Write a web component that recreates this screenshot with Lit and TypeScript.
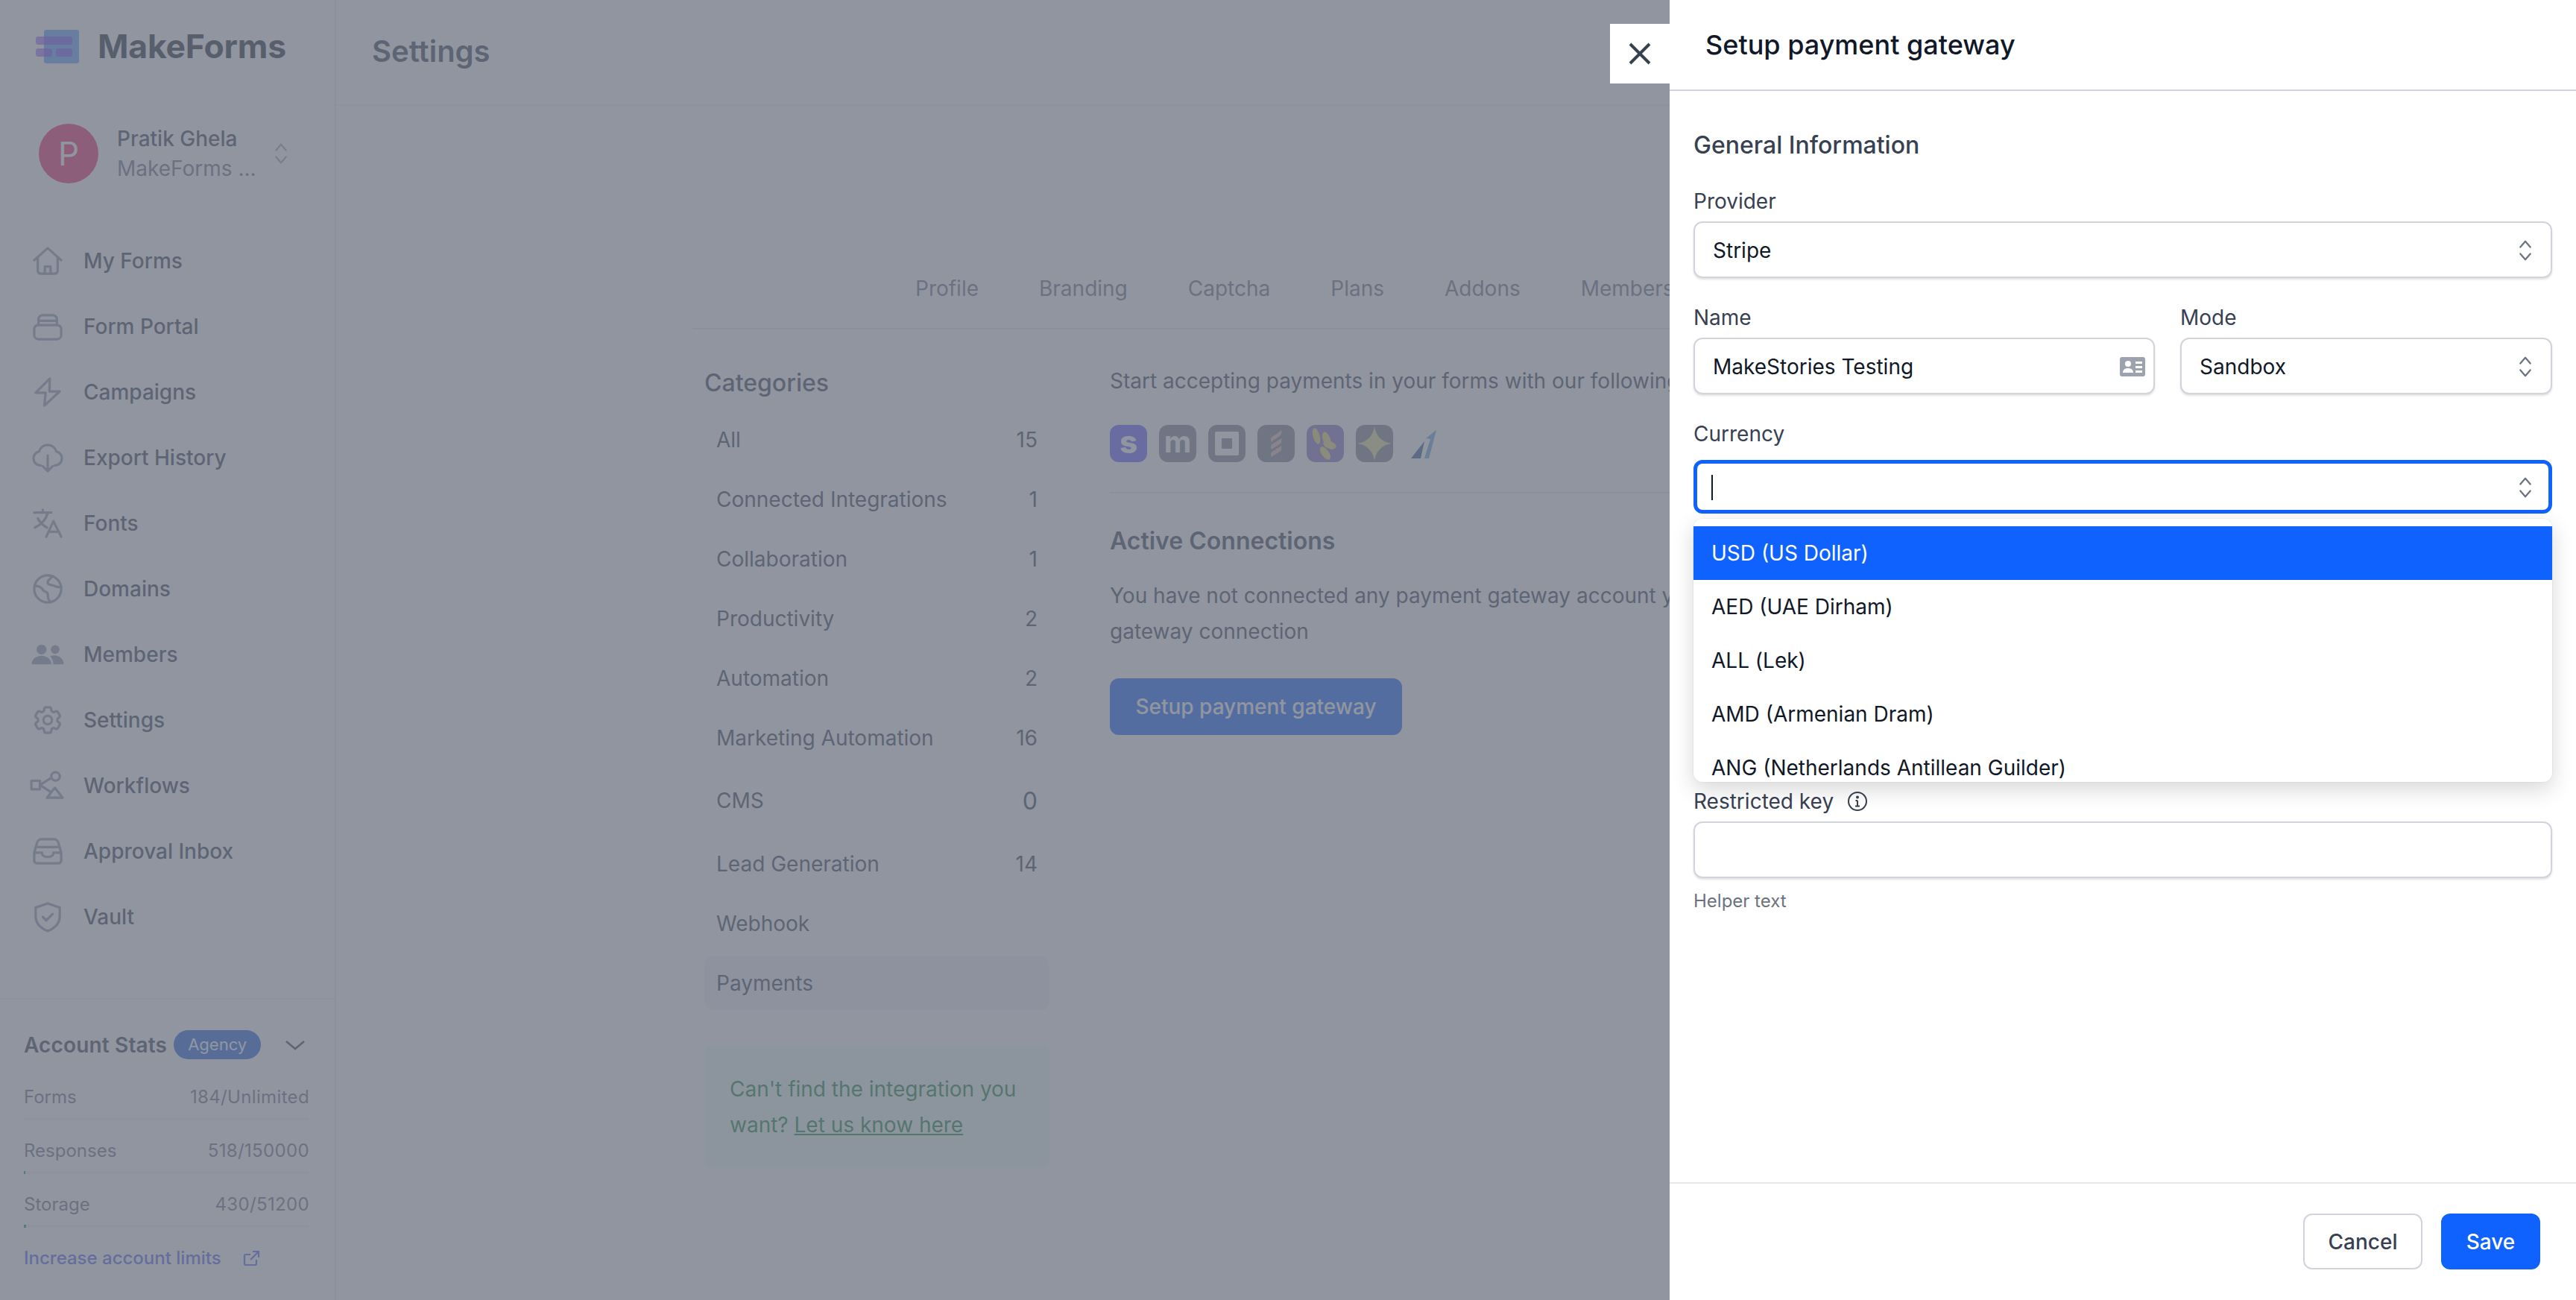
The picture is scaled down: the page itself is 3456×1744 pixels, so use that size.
import { LitElement, html, css, svg } from 'lit';
import { customElement } from 'lit/decorators.js';

const navIcons: Record<string, unknown> = {
  home: svg`<path d="M2.5 11.5 12 3l9.5 8.5M5 9.5V19a2 2 0 0 0 2 2h10a2 2 0 0 0 2-2V9.5M10 21v-5h4v5"/>`,
  portal: svg`<rect x="2.5" y="11" width="19" height="10" rx="3"/><path d="M5.5 11V7a3 3 0 0 1 3-3h7a3 3 0 0 1 3 3v4M5.5 8h13"/>`,
  bolt: svg`<path d="M13.5 2.5 3.5 12.5h7l-.8 9 10.8-10h-7.3z"/>`,
  cloud: svg`<path d="M7 17.5a5 5 0 0 1-1-9.9 6.2 6.2 0 0 1 12 0 5 5 0 0 1-1 9.9M12 10.5V21.5M8.5 18l3.5 3.5 3.5-3.5"/>`,
  fonts: svg`<path d="M2.5 4.5h12M8.5 2.5v2M12 4.5c-1 4.5-4.500 8.500-9 10.500M5 8.500c1.500 3 3.500 5 6.500 6.500M11 21.500l5-11 5.500 11M12.500 18h7.500"/>`,
  globe: svg`<circle cx="12" cy="12" r="9.500"/><path d="M3 10c3 0 4.500.5 5.500 2.500s3 1 3.500 3-.5 3 1.500 5.500M15.500 3c-1.500 2-3.500 2.500-3.500 4.500s3 1.500 5 2.500 3 1 4.500.5"/>`,
  gear: svg`<path d="M9.594 3.94c.09-.542.56-.94 1.11-.94h2.593c.55 0 1.02.398 1.11.94l.213 1.281c.063.374.313.686.645.87.074.04.147.083.22.127.324.196.72.257 1.075.124l1.217-.456a1.125 1.125 0 011.37.49l1.296 2.247a1.125 1.125 0 01-.26 1.431l-1.003.827c-.293.24-.438.613-.431.992a6.759 6.759 0 010 .255c-.007.378.138.75.43.99l1.005.828c.424.35.534.954.26 1.43l-1.298 2.247a1.125 1.125 0 01-1.369.491l-1.217-.456c-.355-.133-.75-.072-1.076.124a6.57 6.57 0 01-.22.128c-.331.183-.581.495-.644.869l-.213 1.28c-.09.543-.56.941-1.11.941h-2.594c-.55 0-1.02-.398-1.11-.94l-.213-1.281c-.062-.374-.312-.686-.644-.87a6.52 6.52 0 01-.22-.127c-.325-.196-.72-.257-1.076-.124l-1.217.456a1.125 1.125 0 01-1.369-.49l-1.297-2.247a1.125 1.125 0 01.26-1.431l1.004-.827c.292-.24.437-.613.43-.992a6.932 6.932 0 010-.255c.007-.378-.138-.75-.43-.99l-1.004-.828a1.125 1.125 0 01-.26-1.43l1.297-2.247a1.125 1.125 0 011.37-.491l1.216.456c.356.133.751.072 1.076-.124.072-.044.146-.087.22-.128.332-.183.582-.495.644-.869l.214-1.281z"/><circle cx="12" cy="12" r="3"/>`,
  flow: svg`<rect x="0.500" y="8.500" width="6" height="6"/><circle cx="17.500" cy="5.500" r="3"/><path d="M6.500 11.500 14.500 6.500M6.500 11.500l7 4.500M17 13.500l5.500 7h-11z"/>`,
  inbox: svg`<path d="m2.500 13 2-7a3 3 0 0 1 3-2.500h9a3 3 0 0 1 3 2.500l2 7M2.500 13v5.500a2 2 0 0 0 2 2h15a2 2 0 0 0 2-2V13M2.500 13H8c0 2 1.500 3 4 3s4-1 4-3h5.500M5 9h14"/>`,
  shield: svg`<path d="M12 2.500 20.500 5.500v6c0 5-3.500 8.500-8.500 10.500-5-2-8.500-5.500-8.500-10.500v-6zM8.500 12l2.500 2.500 4.500-4.500"/>`,
};

const nav = [
  ['My Forms', 'home'], ['Form Portal', 'portal'], ['Campaigns', 'bolt'], ['Export History', 'cloud'],
  ['Fonts', 'fonts'], ['Domains', 'globe'], ['Members', 'members'], ['Settings', 'gear'],
  ['Workflows', 'flow'], ['Approval Inbox', 'inbox'], ['Vault', 'shield'],
];

const stats = [
  { label: 'Forms', value: '184/Unlimited', used: 0 },
  { label: 'Responses', value: '518/150000', used: 0.5 },
  { label: 'Storage', value: '430/51200', used: 0.9 },
];

const tabs = ['Profile', 'Branding', 'Captcha', 'Plans', 'Addons', 'Members'];

const categories = [
  ['All', '15'], ['Connected Integrations', '1'], ['Collaboration', '1'], ['Productivity', '2'],
  ['Automation', '2'], ['Marketing Automation', '16'], ['CMS', '0'], ['Lead Generation', '14'],
  ['Webhook', ''], ['Payments', ''],
];

const currencies = ['USD (US Dollar)', 'AED (UAE Dirham)', 'ALL (Lek)', 'AMD (Armenian Dram)', 'ANG (Netherlands Antillean Guilder)'];

const providers = [
  svg`<rect width="50" height="50" rx="12" fill="#7d7f8c"/><rect x="9" y="9" width="32" height="32" rx="2" fill="#fff"/><rect x="18" y="18" width="14" height="14" rx="1" fill="#7d7f8c"/>`,
  svg`<rect width="50" height="50" rx="12" fill="#7d7f8c"/><path d="M18 18c3-4 9-6 14-11 1 3 0 5-1 7-3 3-9 5-12 9-1-1-1-3-1-5zM18 28c3-4 9-6 14-10 1 3 0 5-1 7-3 3-9 5-12 8-1-1-1-3-1-5zM18 38c3-4 9-6 14-10 1 3 0 5-1 7-3 3-9 5-12 8-1-1-1-3-1-5z" fill="#e6b8b0"/>`,
  svg`<rect width="50" height="50" rx="12" fill="#8a72c8"/><g fill="#e6d56a"><ellipse cx="13" cy="15" rx="4.500" ry="11" transform="rotate(-15 13 15)"/><ellipse cx="27" cy="20" rx="5" ry="11" transform="rotate(-20 27 20)"/><ellipse cx="31" cy="27" rx="9" ry="5" transform="rotate(20 31 27)"/><ellipse cx="25" cy="38" rx="5" ry="10" transform="rotate(-35 25 38)"/></g>`,
  svg`<rect width="50" height="50" rx="12" fill="#7d7f8c"/><path d="M25 2c2 13 10 21 23 23-13 2-21 10-23 23-2-13-10-21-23-23 13-2 21-10 23-23z" fill="#e6e08a"/>`,
  svg`<path d="M42 7 28 18l6 1-8 26h6z" fill="#6ea4dc"/><path d="M8 45 26 22 21 45z" fill="#345a92"/>`,
];

@customElement('app-root')
export class AppRoot extends LitElement {
  static styles = css`
    :host {
      display: block;
      position: relative;
      width: 3456px;
      height: 1744px;
      overflow: hidden;
      background: #fff;
      font-family: Inter, 'Liberation Sans', sans-serif;
      font-size: 28px;
      line-height: 40px;
      color: #374151;
    }
    svg { display: block; flex: none; }
    .layout { display: flex; height: 100%; }

    /* sidebar */
    .sidebar {
      width: 449px;
      flex: none;
      display: flex;
      flex-direction: column;
      border-right: 2px solid #e5e7eb;
    }
    .brand { display: flex; align-items: center; gap: 25px; margin: 40px 0 0 48px; height: 45px; }
    .brand-mark { position: relative; width: 58px; height: 45px; }
    .brand-mark i { position: absolute; display: block; }
    .mark-box { left: 11px; top: 0; width: 47px; height: 45px; border-radius: 3px; background: rgba(38, 132, 255, 0.75); }
    .mark-bar { height: 11px; border-radius: 3px; background: rgba(120, 40, 255, 0.6); }
    .brand-name { font-size: 44.500px; line-height: 45px; font-weight: 700; color: #1f2937; letter-spacing: -0.2px; }
    .account { display: flex; align-items: center; margin: 81px 0 0 52px; }
    .avatar {
      width: 80px;
      height: 80px;
      border-radius: 50%;
      background: #ee2668;
      color: #fff;
      font-size: 44px;
      display: flex;
      align-items: center;
      justify-content: center;
    }
    .who { margin-left: 25px; width: 210px; font-size: 28px; line-height: 40px; }
    .who b { display: block; font-weight: 500; }
    .who span { display: block; color: #6b7280; }
    .nav { margin-top: 60px; }
    .nav-row { display: flex; align-items: center; height: 88px; padding-left: 44px; font-weight: 500; }
    .nav-row svg { width: 40px; height: 40px; fill: none; stroke: #8f97a6; stroke-width: 1.700; stroke-linejoin: round; stroke-linecap: round; }
    .nav-row svg.solid { fill: #8f97a6; stroke: none; width: 44px; margin-left: -2px; margin-right: -2px; }
    .nav-row span { margin-left: 28px; }
    .stats { margin-top: auto; border-top: 2px solid #f3f4f6; height: 405px; padding: 41px 34px 0 32px; box-sizing: border-box; }
    .stats-head { display: flex; align-items: center; height: 39px; }
    .stats-head b { font-weight: 600; font-size: 28px; letter-spacing: 0.15px; }
    .plan {
      margin-left: 9px;
      width: 117px;
      height: 39px;
      border-radius: 20px;
      background: #1d5fdf;
      color: #fff;
      font-size: 22px;
      line-height: 39px;
      text-align: center;
    }
    .stats-head svg { margin-left: auto; margin-right: 6px; width: 26px; height: 14px; fill: none; stroke: #374151; stroke-width: 2.5; }
    .stat { margin-top: 35px; font-size: 24px; line-height: 32px; color: #6b7280; }
    .stat + .stat { margin-top: 25px; }
    .stat-line { display: flex; justify-content: space-between; }
    .stat-line span:last-child { letter-spacing: 0.35px; }
    .bar { height: 4px; margin-top: 11px; background: #f3f4f6; border-radius: 2px; }
    .bar i { display: block; height: 100%; background: #16a34a; }
    .limits { display: flex; align-items: center; margin-top: 25px; color: #4f63ee; font-size: 24px; line-height: 32px; font-weight: 500; }
    .limits svg { margin-left: 28px; width: 24px; height: 24px; fill: none; stroke: #4f63ee; stroke-width: 2.2; }

    /* settings page */
    .main { flex: 1; min-width: 0; overflow: hidden; }
    .page-head { border-bottom: 2px solid #f3f4f6; padding: 45px 0 0 48px; box-sizing: border-box; height: 142px; }
    .page-head h1 { margin: 0; font-size: 40px; line-height: 48px; font-weight: 600; color: #374151; }
    .container { margin-left: 478px; width: 2046px; }
    .tabs { display: flex; gap: 81px; padding: 225px 0 33px 299px; border-bottom: 2px solid #e5e7eb; color: #6b7280; white-space: nowrap; }
    .content { display: grid; grid-template-columns: 463px 1fr; column-gap: 81px; padding-left: 16px; }
    .side h2 { margin: 50px 0 18px; font-size: 32px; line-height: 44px; font-weight: 500; }
    .cat { display: flex; justify-content: space-between; padding: 16px 16px 16px 16px; margin-bottom: 8px; border-radius: 12px; line-height: 40px; }
    .cat.tall { line-height: 49px; }
    .cat.tall b { font-size: 32px; }
    .cat b { font-weight: 400; }
    .cat.active { background: #f3f4f6; }
    .help {
      margin-top: 48px;
      padding: 33px;
      border: 1px solid #ecfdf5;
      background: #f0fdf4;
      border-radius: 8px;
      color: #15803d;
      line-height: 48px;
    }
    .help a { color: inherit; text-decoration: underline; }
    .detail p { margin: 0; white-space: nowrap; }
    .intro { margin-top: 49px !important; }
    .logos { display: flex; gap: 16px; margin-top: 39px; }
    .logos svg { width: 50px; height: 50px; }
    .tile {
      width: 50px;
      height: 50px;
      border-radius: 12px;
      display: flex;
      align-items: center;
      justify-content: center;
      color: #fff;
      line-height: 1;
    }
    .tile.s { background: #635bff; font-size: 42px; font-weight: 800; padding-bottom: 4px; box-sizing: border-box; }
    .tile.m { background: #7d7f8c; font-size: 40px; font-weight: 700; padding-bottom: 4px; box-sizing: border-box; }
    .rule { height: 2px; background: #e5e7eb; margin-top: 40px; }
    .detail h3 { margin: 42px 0 27px; font-size: 32px; line-height: 44px; font-weight: 600; }
    .copy { line-height: 48px; }
    .primary { border: 0; border-radius: 12px; background: #0f62fe; color: #fff; font: inherit; font-weight: 500; }
    .setup { width: 392px; height: 76px; margin-top: 39px; }

    /* overlay and panel */
    .scrim { position: absolute; inset: 0; background: rgba(107, 114, 128, 0.75); }
    .close {
      position: absolute;
      left: 2160px;
      top: 32px;
      width: 80px;
      height: 80px;
      background: #fff;
      display: flex;
      align-items: center;
      justify-content: center;
    }
    .close svg { width: 30px; height: 30px; stroke: #374151; stroke-width: 4; fill: none; }
    .panel { position: absolute; top: 0; bottom: 0; left: 2240px; width: 1216px; background: #fff; display: flex; flex-direction: column; }
    .panel-head { height: 120px; border-bottom: 2px solid #d1d5db; padding-left: 48px; display: flex; align-items: center; flex: none; }
    .panel-head h2 { margin: 0; font-size: 36px; line-height: 44px; font-weight: 500; color: #111827; }
    .form { flex: 1; padding: 51px 32px 0 32px; }
    .form h3 { margin: 0; font-size: 32px; line-height: 44px; font-weight: 500; color: #374151; }
    .label { display: flex; align-items: center; color: #374151; line-height: 42px; }
    .label svg { margin-left: 18px; width: 28px; height: 28px; fill: none; stroke: #374151; stroke-width: 2; }
    .field { margin-top: 32px; min-width: 0; }
    .two { display: flex; gap: 34px; }
    .two .field:first-child { width: 619px; flex: none; }
    .two .field:last-child { flex: 1; }
    .input {
      display: flex;
      align-items: center;
      justify-content: space-between;
      height: 76px;
      margin-top: 6px;
      padding: 2px 24px 0;
      box-sizing: border-box;
      border: 2px solid #d1d5db;
      border-radius: 12px;
      background: #fff;
      box-shadow: 0 2px 3px rgba(0, 0, 0, 0.12);
      color: #111827;
    }
    .input svg.updown { width: 20px; height: 32px; fill: none; stroke: #6b7280; stroke-width: 2; stroke-linecap: round; stroke-linejoin: round; margin-right: 0; }
    .input svg.card { width: 34px; height: 28px; margin-right: -13px; }
    .currency { position: relative; margin-bottom: 365px; }
    .currency .input { height: 72px; margin-top: 14px; border: 5px solid #0f62fe; padding-left: 19px; padding-right: 21px; box-shadow: none; }
    .caret { width: 2px; height: 34px; background: #111827; }
    .menu {
      position: absolute;
      left: 0;
      right: 0;
      top: 135px;
      height: 353px;
      padding-top: 10px;
      box-sizing: border-box;
      overflow: hidden;
      background: #fff;
      border-radius: 12px;
      box-shadow: 0 0 0 1px rgba(0, 0, 0, 0.03), 0 10px 30px rgba(0, 0, 0, 0.16);
      color: #111827;
    }
    .option { height: 72px; line-height: 72px; padding-left: 24px; }
    .option.on { background: #0f62fe; color: #fff; }
    .restricted { margin-top: 0; }
    .helper { margin-top: 15px; font-size: 24px; line-height: 32px; color: #6b7280; }
    .panel-foot { flex: none; display: flex; justify-content: flex-end; gap: 25px; height: 158px; padding: 40px 48px 0 0; box-sizing: border-box; border-top: 2px solid #e5e7eb; }
    .panel-foot button { height: 75px; border-radius: 12px; font: inherit; font-weight: 500; }
    .cancel { width: 160px; background: #fff; border: 2px solid #d1d5db; color: #374151; }
    .save { width: 133px; }
  `;

  private updown() {
    return html`<svg class="updown" viewBox="0 0 18 28"><path d="M3 10 9 3l6 7M3 18l6 7 6-7"/></svg>`;
  }

  render() {
    return html`
      <div class="layout">
        <aside class="sidebar">
          <div class="brand">
            <div class="brand-mark">
              <i class="mark-box"></i>
              <i class="mark-bar" style="left:0;top:9px;width:49px"></i>
              <i class="mark-bar" style="left:0;top:25px;width:22px"></i>
              <i class="mark-bar" style="left:27px;top:25px;width:22px"></i>
            </div>
            <div class="brand-name">MakeForms</div>
          </div>
          <div class="account">
            <div class="avatar">P</div>
            <div class="who"><b>Pratik Ghela</b><span>MakeForms ...</span></div>
            <svg width="20" height="32" viewBox="0 0 18 28" fill="none" stroke="#9ca3af" stroke-width="2" stroke-linecap="round"><path d="M3 10 9 3l6 7M3 18l6 7 6-7"/></svg>
          </div>
          <nav class="nav">
            ${nav.map(([label, icon]) => html`
              <div class="nav-row">
                ${icon === 'members'
                  ? html`<svg class="solid" viewBox="0 0 26 24"><circle cx="8" cy="8" r="4"/><circle cx="19" cy="8" r="3.500"/><path d="M0 20c0-4 3.500-7 8-7s8 3 8 7zM17.500 20c0-3-1-5-2.500-6.500 1-.5 2.500-.7 3.500-.7 4 0 7.500 3 7.500 7.200z"/></svg>`
                  : html`<svg viewBox="1.500 1.500 21 21" style="overflow:visible">${navIcons[icon]}</svg>`}
                <span>${label}</span>
              </div>`)}
          </nav>
          <div class="stats">
            <div class="stats-head">
              <b>Account Stats</b><span class="plan">Agency</span>
              <svg viewBox="0 0 26 14"><path d="m1 2 12 10L25 2"/></svg>
            </div>
            ${stats.map((s) => html`
              <div class="stat">
                <div class="stat-line"><span>${s.label}</span><span>${s.value}</span></div>
                <div class="bar"><i style="width:${s.used}%"></i></div>
              </div>`)}
            <div class="limits">
              <span>Increase account limits</span>
              <svg viewBox="0 0 24 24"><path d="M19 14v5a2 2 0 0 1-2 2H5a2 2 0 0 1-2-2V9a2 2 0 0 1 2-2h6M14 3h8v8M22 3 11 14"/></svg>
            </div>
          </div>
        </aside>
        <main class="main">
          <div class="page-head"><h1>Settings</h1></div>
          <div class="container">
            <div class="tabs">${tabs.map((t) => html`<span>${t}</span>`)}</div>
            <div class="content">
              <div class="side">
                <h2>Categories</h2>
                ${categories.map(([name, count]) => html`
                  <div class="cat ${name === 'Payments' ? 'active' : ''} ${name === 'CMS' ? 'tall' : ''}">
                    <span>${name}</span><b>${count}</b>
                  </div>`)}
                <div class="help">Can't find the integration you want? <a href="#">Let us know here</a></div>
              </div>
              <div class="detail">
                <p class="intro">Start accepting payments in your forms with our following payment gateways</p>
                <div class="logos">
                  <span class="tile s">s</span>
                  <span class="tile m">m</span>
                  ${providers.map((p) => html`<svg viewBox="0 0 50 50">${p}</svg>`)}
                </div>
                <div class="rule"></div>
                <h3>Active Connections</h3>
                <p class="copy">You have not connected any payment gateway account yet. Click the button below to add a new payment<br />gateway connection</p>
                <button class="primary setup">Setup payment gateway</button>
              </div>
            </div>
          </div>
        </main>
      </div>
      <div class="scrim"></div>
      <div class="close"><svg viewBox="0 0 30 30"><path d="m2 2 26 26M28 2 2 28"/></svg></div>
      <section class="panel">
        <header class="panel-head"><h2>Setup payment gateway</h2></header>
        <div class="form">
          <h3>General Information</h3>
          <div class="field">
            <div class="label">Provider</div>
            <div class="input"><span>Stripe</span>${this.updown()}</div>
          </div>
          <div class="two">
            <div class="field">
              <div class="label">Name</div>
              <div class="input">
                <span>MakeStories Testing</span>
                <svg class="card" viewBox="0 0 34 28"><rect y="1" width="34" height="26" rx="3" fill="#9ca3af"/><g fill="#fff"><circle cx="11" cy="10" r="4"/><path d="M4 22c0-4 3-6 7-6s7 2 7 6zM21 7h9v3h-9zM21 13h9v3h-9zM21 19h9v3h-9z"/></g></svg>
              </div>
            </div>
            <div class="field">
              <div class="label">Mode</div>
              <div class="input"><span>Sandbox</span>${this.updown()}</div>
            </div>
          </div>
          <div class="field currency">
            <div class="label">Currency</div>
            <div class="input"><span class="caret"></span>${this.updown()}</div>
            <div class="menu">
              ${currencies.map((c, i) => html`<div class="option ${i === 0 ? 'on' : ''}">${c}</div>`)}
            </div>
          </div>
          <div class="field restricted">
            <div class="label">Restricted key
              <svg viewBox="0 0 28 28"><circle cx="14" cy="14" r="12"/><path d="M14 13v7M11.500 13H14M11 20.500h6"/><circle cx="14" cy="8.500" r="1" fill="#374151"/></svg>
            </div>
            <div class="input"></div>
            <div class="helper">Helper text</div>
          </div>
        </div>
        <footer class="panel-foot">
          <button class="cancel">Cancel</button>
          <button class="primary save">Save</button>
        </footer>
      </section>
    `;
  }
}
